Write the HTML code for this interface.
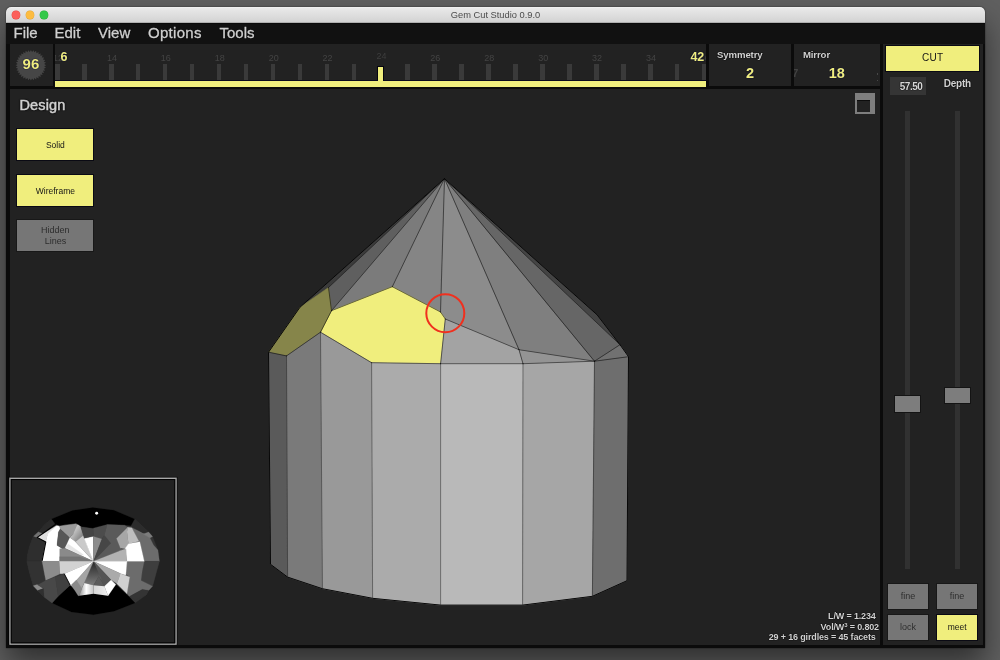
<!DOCTYPE html>
<html>
<head>
<meta charset="utf-8">
<title>Gem Cut Studio 0.9.0</title>
<style>
*{box-sizing:border-box;margin:0;padding:0}
html,body{width:1000px;height:660px;overflow:hidden}
body{background:#606060;font-family:"Liberation Sans",sans-serif;position:relative}
#win{position:absolute;left:6px;top:6.5px;width:979px;height:641px;background:#0b0b0b;border-radius:5px 5px 0 0;box-shadow:0 16px 30px rgba(0,0,0,.5),0 0 1.5px rgba(0,0,0,.8)}
#title{position:absolute;left:0;top:0;width:979px;height:16.5px;border-radius:5px 5px 0 0;background:linear-gradient(#f2f2f2 0,#e9e9e9 8%,#d3d3d3 100%);border-bottom:1px solid #b0b0b0}
#title .t{position:absolute;left:0;width:979px;top:3.5px;text-align:center;font-size:9.3px;color:#4c4c4c}
.tl{position:absolute;top:4.3px;width:7.8px;height:7.8px;border-radius:50%}
.menu{position:absolute;top:17px;font-size:15px;color:#cfcfcf;line-height:18px;text-shadow:0 0 1px #000;-webkit-text-stroke:.3px #cfcfcf}
.panel{position:absolute;background:#222}
.btn{position:absolute;font-size:8.5px;text-align:center;color:#151515;background:#f0ee7d;box-shadow:0 0 0 1px #0a0a14}
.gbtn{background:#767676;color:#2e2e2e;font-size:9px;box-shadow:0 0 0 1px #181818}
.lbl{position:absolute;color:#d2d2d2;font-weight:bold;text-shadow:0 0 1px #000,0 0 1px #000;white-space:nowrap}
.ynum{position:absolute;color:#f0ee7d;font-weight:bold;text-shadow:0 0 1px #00003c,0 0 1px #00003c;white-space:nowrap}
.tick{position:absolute;top:20.7px;width:4.5px;height:17px;background:#3a3a3a}
.tn{position:absolute;top:9px;width:20px;text-align:center;font-size:9px;color:#444;line-height:10px}
svg{position:absolute;left:0;top:0;overflow:visible}
</style>
</head>
<body>
<div id="layer" style="position:absolute;left:0;top:0;width:1000px;height:660px;will-change:transform">
<div id="win">
<div id="title">
<div class="tl" style="left:6px;background:#fc605b;box-shadow:0 0 0 .4px #e0443e"></div>
<div class="tl" style="left:20px;background:#fdbc40;box-shadow:0 0 0 .4px #dea032"></div>
<div class="tl" style="left:34px;background:#34c84a;box-shadow:0 0 0 .4px #27aa35"></div>
<div class="t">Gem Cut Studio 0.9.0</div>
</div>
<div style="position:absolute;left:0;top:17.5px;width:979px;height:19.5px;background:#111"></div>
<div class="menu" style="left:7.5px">File</div>
<div class="menu" style="left:48.5px">Edit</div>
<div class="menu" style="left:92px">View</div>
<div class="menu" style="left:142px;letter-spacing:.3px">Options</div>
<div class="menu" style="left:213.5px">Tools</div>
<div class="panel" id="p96" style="left:4px;top:37px;width:42.7px;height:42.7px">
<svg width="42.7" height="42.7"><polygon points="36.2,21.2 34.15,22.36 35.97,23.86 33.75,24.64 35.28,26.43 32.95,26.82 34.15,28.85 31.79,28.83 32.62,31.03 30.3,30.6 30.73,32.92 28.53,32.09 28.55,34.45 26.52,33.25 26.13,35.58 24.34,34.05 23.56,36.27 22.06,34.45 20.9,36.5 19.74,34.45 18.24,36.27 17.46,34.05 15.67,35.58 15.28,33.25 13.25,34.45 13.27,32.09 11.07,32.92 11.5,30.6 9.18,31.03 10.01,28.83 7.65,28.85 8.85,26.82 6.52,26.43 8.05,24.64 5.83,23.86 7.65,22.36 5.6,21.2 7.65,20.04 5.83,18.54 8.05,17.76 6.52,15.97 8.85,15.58 7.65,13.55 10.01,13.57 9.18,11.37 11.5,11.8 11.07,9.48 13.27,10.31 13.25,7.95 15.28,9.15 15.67,6.82 17.46,8.35 18.24,6.13 19.74,7.95 20.9,5.9 22.06,7.95 23.56,6.13 24.34,8.35 26.13,6.82 26.52,9.15 28.55,7.95 28.53,10.31 30.73,9.48 30.3,11.8 32.62,11.37 31.79,13.57 34.15,13.55 32.95,15.58 35.28,15.97 33.75,17.76 35.97,18.54 34.15,20.04" fill="#464646"/></svg>
<div class="ynum" style="left:0;width:41.8px;text-align:center;top:11.6px;font-size:15px;line-height:17px">96</div>
</div>
<div class="panel" id="ruler" style="left:49px;top:37px;width:650.5px;height:43.4px;overflow:hidden">
<div class="tick" style="left:0.1px"></div>
<div class="tn" style="left:-6.95px">12</div>
<div class="tick" style="left:27.05px"></div>
<div class="tick" style="left:54px"></div>
<div class="tn" style="left:46.95px">14</div>
<div class="tick" style="left:80.95px"></div>
<div class="tick" style="left:107.9px"></div>
<div class="tn" style="left:100.85px">16</div>
<div class="tick" style="left:134.85px"></div>
<div class="tick" style="left:161.8px"></div>
<div class="tn" style="left:154.75px">18</div>
<div class="tick" style="left:188.75px"></div>
<div class="tick" style="left:215.7px"></div>
<div class="tn" style="left:208.65px">20</div>
<div class="tick" style="left:242.65px"></div>
<div class="tick" style="left:269.6px"></div>
<div class="tn" style="left:262.55px">22</div>
<div class="tick" style="left:296.55px"></div>
<div class="tn" style="left:316.45px;top:7.5px;color:#3e3e3e">24</div>
<div class="tick" style="left:350.45px"></div>
<div class="tick" style="left:377.4px"></div>
<div class="tn" style="left:370.35px">26</div>
<div class="tick" style="left:404.35px"></div>
<div class="tick" style="left:431.3px"></div>
<div class="tn" style="left:424.25px">28</div>
<div class="tick" style="left:458.25px"></div>
<div class="tick" style="left:485.2px"></div>
<div class="tn" style="left:478.15px">30</div>
<div class="tick" style="left:512.15px"></div>
<div class="tick" style="left:539.1px"></div>
<div class="tn" style="left:532.05px">32</div>
<div class="tick" style="left:566.05px"></div>
<div class="tick" style="left:593px"></div>
<div class="tn" style="left:585.95px">34</div>
<div class="tick" style="left:619.95px"></div>
<div class="tick" style="left:646.9px"></div>
<div class="tn" style="left:639.85px">36</div>
<div style="position:absolute;left:323.4px;top:23.7px;width:4.7px;height:15px;background:#f0ee7d;box-shadow:0 0 0 1px #05050f"></div>
<div style="position:absolute;left:0;top:37.3px;width:650.5px;height:6px;background:#f0ee7d;box-shadow:0 0 0 1px #0a0a1e"></div>
<div style="position:absolute;left:323.4px;top:35.5px;width:4.7px;height:3px;background:#f0ee7d"></div>
<div class="ynum" style="left:5.5px;top:6px;font-size:12.5px;line-height:14px">6</div>
<div class="ynum" style="right:1.2px;top:6px;font-size:12.5px;line-height:14px;background:#222;padding-left:2px">42</div>
</div>
<div class="panel" id="psym" style="left:702.6px;top:37px;width:82.7px;height:42.7px;overflow:hidden">
<div class="lbl" style="left:8.4px;top:5.5px;font-size:9.6px;line-height:12px;letter-spacing:-.1px">Symmetry</div>
<div class="ynum" style="left:0;width:82.7px;text-align:center;top:21.5px;font-size:14.5px;line-height:17px">2</div>
</div>
<div class="panel" id="pmir" style="left:787.5px;top:37px;width:86.7px;height:42.7px;overflow:hidden">
<div class="lbl" style="left:9.4px;top:5.5px;font-size:9.6px;line-height:12px;letter-spacing:-.1px">Mirror</div>
<div class="ynum" style="left:0;width:86.7px;text-align:center;top:21.5px;font-size:14.5px;line-height:17px">18</div>
<div style="position:absolute;left:-1.2px;top:23.5px;font-size:11px;line-height:12px;color:#424242;font-weight:bold">7</div>
<div style="position:absolute;left:83px;top:29.5px;width:1.7px;height:1.7px;background:#484848"></div>
<div style="position:absolute;left:83px;top:36.3px;width:1.7px;height:1.7px;background:#484848"></div>
</div>
<div class="panel" id="view" style="left:3.7px;top:82.5px;width:870.6px;height:556px">
<div class="lbl" style="left:9.8px;top:8px;font-size:14.5px;line-height:17px;font-weight:normal;letter-spacing:.15px;color:#d0d0d0;-webkit-text-stroke:.5px #d0d0d0;text-shadow:0 0 1px #000,0 0 2px #000,0 0 2px #000">Design</div>
<div class="btn " style="left:7.8px;top:40.4px;width:75.8px;height:30.9px;line-height:32.3px">Solid</div>
<div class="btn " style="left:7.8px;top:85.5px;width:75.8px;height:31.3px;line-height:32.7px">Wireframe</div>
<div class="btn gbtn" style="left:7.8px;top:131px;width:75.8px;height:30.6px;line-height:10.5px;padding-top:5.2px">Hidden<br>Lines</div>
<div style="position:absolute;left:845.3px;top:4.4px;width:20px;height:20.6px;background:#7e7e7e"><div style="position:absolute;left:2.5px;top:6.5px;width:12.3px;height:12px;background:#222;border-top:1px solid #0c0c0c"></div></div>
<svg width="1000" height="660" viewBox="0 0 1000 660" style="left:-9.7px;top:-89px">
<g stroke-width="0.6" stroke-linejoin="round">
<polygon points="444.5,178.6 328.5,287.5 300,307.2" fill="#3b3b3b" stroke="#3b3b3b"/>
<polygon points="444.5,178.6 597,314.7 620,344.7" fill="#444444" stroke="#444444"/>
<polygon points="444.5,178.6 331.5,310.7 328.5,287.5" fill="#5f5f5f" stroke="#5f5f5f"/>
<polygon points="444.5,178.6 392.3,286.7 331.5,310.7" fill="#7b7b7b" stroke="#7b7b7b"/>
<polygon points="444.5,178.6 440.5,312 392.3,286.7" fill="#858585" stroke="#858585"/>
<polygon points="444.5,178.6 519,349.7 445.3,319 440.5,312" fill="#8c8c8c" stroke="#8c8c8c"/>
<polygon points="444.5,178.6 594.5,361.2 519,349.7" fill="#7f7f7f" stroke="#7f7f7f"/>
<polygon points="444.5,178.6 620,344.7 594.5,361.2" fill="#666666" stroke="#666666"/>
<polygon points="331.5,310.7 392.3,286.7 440.5,312 445.3,319 440.6,363.7 371.6,362.7 320.5,332.2" fill="#f0ee7d" stroke="#f0ee7d"/>
<polygon points="328.5,287.5 331.5,310.7 320.5,332.2 286.5,355.9 268.5,352.2 300,307.2" fill="#86854a" stroke="#86854a"/>
<polygon points="445.3,319 519,349.7 523,363.7 440.6,363.7" fill="#a3a3a3" stroke="#a3a3a3"/>
<polygon points="519,349.7 594.5,361.2 523,363.7" fill="#949494" stroke="#949494"/>
<polygon points="594.5,361.2 620,344.7 628.5,356.7" fill="#717171" stroke="#717171"/>
<polygon points="268.5,352.2 286.5,355.9 287.6,577.1 270.5,564.3" fill="#5a5a5a" stroke="#5a5a5a"/>
<polygon points="286.5,355.9 320.5,332.2 322.4,588.7 287.6,577.1" fill="#7a7a7a" stroke="#7a7a7a"/>
<polygon points="320.5,332.2 371.6,362.7 372.6,598.3 322.4,588.7" fill="#999999" stroke="#999999"/>
<polygon points="371.6,362.7 440.6,363.7 440.6,605.1 372.6,598.3" fill="#ababab" stroke="#ababab"/>
<polygon points="440.6,363.7 523,363.7 522.6,605.1 440.6,605.1" fill="#b9b9b9" stroke="#b9b9b9"/>
<polygon points="523,363.7 594.5,361.2 592.4,596.3 522.6,605.1" fill="#a6a6a6" stroke="#a6a6a6"/>
<polygon points="594.5,361.2 628.5,356.7 627,580.7 592.4,596.3" fill="#6e6e6e" stroke="#6e6e6e"/>
</g>
<g stroke="#000" stroke-opacity="0.6" stroke-width="0.85" stroke-linecap="round" fill="none">
<path d="M444.5 178.6L328.5 287.5"/>
<path d="M444.5 178.6L331.5 310.7"/>
<path d="M444.5 178.6L392.3 286.7"/>
<path d="M444.5 178.6L440.5 312"/>
<path d="M444.5 178.6L519 349.7"/>
<path d="M444.5 178.6L594.5 361.2"/>
<path d="M444.5 178.6L620 344.7"/>
<path d="M328.5 287.5L331.5 310.7"/>
<path d="M331.5 310.7L392.3 286.7"/>
<path d="M392.3 286.7L440.5 312"/>
<path d="M440.5 312L445.3 319"/>
<path d="M445.3 319L519 349.7"/>
<path d="M519 349.7L594.5 361.2"/>
<path d="M519 349.7L523 363.7"/>
<path d="M594.5 361.2L620 344.7"/>
<path d="M331.5 310.7L320.5 332.2"/>
<path d="M445.3 319L440.6 363.7"/>
<path d="M320.5 332.2L286.5 355.9"/>
<path d="M286.5 355.9L268.5 352.2"/>
</g>
<g stroke="#000" stroke-opacity="0.6" stroke-width="0.85" stroke-linecap="round" fill="none">
<path d="M320.5 332.2L371.6 362.7"/>
<path d="M371.6 362.7L440.6 363.7"/>
<path d="M440.6 363.7L523 363.7"/>
<path d="M523 363.7L594.5 361.2"/>
<path d="M594.5 361.2L628.5 356.7"/>
</g>
<g stroke="#000" stroke-opacity="0.38" stroke-width="1" stroke-linecap="round" fill="none">
<path d="M286.5 355.9L287.6 577.1"/>
<path d="M320.5 332.2L322.4 588.7"/>
<path d="M371.6 362.7L372.6 598.3"/>
<path d="M440.6 363.7L440.6 605.1"/>
<path d="M523 363.7L522.6 605.1"/>
<path d="M594.5 361.2L592.4 596.3"/>
</g>
<polygon points="444.5,178.6 300,307.2 268.5,352.2 270.5,564.3 287.6,577.1 322.4,588.7 372.6,598.3 440.6,605.1 522.6,605.1 592.4,596.3 627,580.7 628.5,356.7 620,344.7 597,314.7" fill="none" stroke="#080808" stroke-width="1" stroke-linejoin="round"/>
<circle cx="445.3" cy="313.2" r="19" fill="none" stroke="#f0301e" stroke-width="2"/>
</svg>
<svg width="1000" height="660" viewBox="0 0 1000 660" style="left:-9.7px;top:-89px">
<defs>
<linearGradient id="gradA" x1="0" y1="0" x2="1" y2="1"><stop offset="0" stop-color="#f4f4f4"/><stop offset="1" stop-color="#6a6a6a"/></linearGradient>
<linearGradient id="gradB" x1="0" y1="0" x2="0" y2="1"><stop offset="0" stop-color="#262626"/><stop offset="1" stop-color="#7c7c7c"/></linearGradient>
<linearGradient id="gradC" x1="0" y1="0" x2="1" y2="0"><stop offset="0" stop-color="#909090"/><stop offset=".5" stop-color="#ffffff"/><stop offset="1" stop-color="#c4c4c4"/></linearGradient>
<linearGradient id="gradD" x1="0" y1="0" x2="1" y2="0"><stop offset="0" stop-color="#d6d6d6"/><stop offset="1" stop-color="#f0f0f0"/></linearGradient>
</defs>
<rect x="8.4" y="476.9" width="169" height="168.1" fill="#000"/>
<rect x="10" y="478.3" width="166" height="165.8" fill="#222" stroke="#a8a8a8" stroke-width="1.5"/>
<rect x="11.25" y="479.55" width="163.5" height="163.3" fill="none" stroke="#000" stroke-width="1"/>
<g stroke-width="0.25">
<polygon points="26.82,561.36 27.58,554.55 29.39,546.97 33.33,536.06 38.48,531.67 45.00,524.24 51.67,518.94 72.27,510.61 92.73,507.58 113.94,510.30 134.55,518.94 141.21,525.00 148.64,532.12 152.58,536.52 157.88,550.00 159.39,561.36 155.91,574.09 152.58,586.06 148.64,590.45 146.21,595.00 135.00,603.03 113.94,611.21 93.48,614.70 71.52,611.97 52.12,603.03 44.09,596.97 37.73,590.91 33.18,585.76 29.09,571.21" fill="#343434" stroke="#343434"/>
<polygon points="131.82,527.73 143.03,532.88 149.85,537.73 153.48,545.00 157.88,550.00 159.39,561.36 144.24,561.36 139.79,541.76 138.94,541.36" fill="#6c6c6c" stroke="#6c6c6c"/>
<polygon points="134.55,518.94 141.21,525.00 148.64,532.12 143.03,532.88 130.91,525.76" fill="#2c2c2c" stroke="#2c2c2c"/>
<polygon points="143.33,534.09 148.64,532.12 152.58,536.52 149.85,537.88" fill="#7c7c7c" stroke="#7c7c7c"/>
<polygon points="144.24,561.36 159.39,561.36 155.83,574.09 152.58,586.14 140.98,580.45 142.20,570.91" fill="#3e3e3e" stroke="#3e3e3e"/>
<polygon points="126.82,561.36 144.24,561.36 142.20,570.91 140.98,580.45 152.58,586.14 148.64,590.45 142.20,589.39 129.39,596.52 126.97,593.79 129.70,576.89 125.76,574.09" fill="#6c6c6c" stroke="#6c6c6c"/>
<polygon points="142.20,589.39 148.64,590.45 146.21,595.00 135.00,600.30 129.39,596.52" fill="#343434" stroke="#343434"/>
<polygon points="26.82,561.36 41.97,561.36 45.76,541.82 37.27,537.73 33.33,536.06 29.39,546.97 27.58,554.55" fill="#2e2e2e" stroke="#2e2e2e"/>
<polygon points="33.64,536.14 38.48,531.67 42.42,532.88 37.27,537.73" fill="#727272" stroke="#727272"/>
<polygon points="26.82,561.36 42.12,561.36 45.76,580.45 38.48,584.55 33.18,585.76 29.09,571.21" fill="#323232" stroke="#323232"/>
<polygon points="33.18,585.76 37.27,584.55 43.33,588.48 37.73,590.61" fill="#8a8a8a" stroke="#8a8a8a"/>
<polygon points="45.00,524.24 51.67,518.94 55.30,523.94 42.42,532.88 38.48,531.67" fill="#2a2a2a" stroke="#2a2a2a"/>
<polygon points="51.67,518.94 72.27,510.61 92.73,507.58 113.94,510.30 134.55,518.94 130.91,525.76 124.55,525.00 107.27,524.55 102.58,527.58 93.03,528.64 81.06,526.67 78.64,524.85 76.21,523.48 65.00,524.55 59.70,526.06 55.30,523.94" fill="#000000" stroke="#000000"/>
<polygon points="52.12,603.03 71.52,611.97 93.48,614.70 113.94,611.21 135.00,603.03 129.39,596.97 116.06,584.55 108.03,595.76 93.48,593.79 79.09,595.76 70.15,585.15 58.18,596.36" fill="#000000" stroke="#000000"/>
<polygon points="37.27,537.42 56.14,525.76 59.70,526.06 47.73,534.55 45.76,541.52" fill="#dedede" stroke="#dedede"/>
<polygon points="45.76,541.82 47.73,534.09 56.97,525.76 59.70,526.67 60.15,529.24 58.48,532.12 56.97,545.30 61.82,548.18 59.70,561.36 41.97,561.36" fill="#ffffff" stroke="#ffffff"/>
<polygon points="59.85,526.06 76.21,523.64 79.09,527.27 73.03,534.55 69.39,537.58 60.15,529.09" fill="#9a9a9a" stroke="#9a9a9a"/>
<polygon points="60.15,529.09 69.39,537.58 65.00,548.18 61.82,548.18 56.97,545.30 58.48,532.12" fill="#575757" stroke="#575757"/>
<polygon points="77.58,524.24 81.06,526.67 83.48,535.30 75.45,541.82 69.85,537.27 73.03,534.55" fill="url(#gradA)"/>
<polygon points="65.00,548.18 69.85,537.58 75.45,541.82 93.48,561.36" fill="#ffffff" stroke="#ffffff"/>
<polygon points="65.45,547.27 68.18,543.94 83.64,554.85 80.61,555.45" fill="#e6e6e6" stroke="#e6e6e6"/>
<polygon points="75.45,541.82 83.48,535.30 84.85,538.79 93.48,561.36" fill="#cacaca" stroke="#cacaca"/>
<polygon points="84.24,538.18 93.18,536.21 93.33,561.36" fill="#ffffff" stroke="#ffffff"/>
<polygon points="59.70,548.79 65.00,548.18 93.48,561.36 59.70,561.36" fill="#8a8a8a" stroke="#8a8a8a"/>
<polygon points="59.70,556.67 79.85,556.67 93.48,561.36 59.70,561.36" fill="#747474" stroke="#747474"/>
<polygon points="80.61,526.67 93.03,528.48 93.18,536.36 84.24,538.33" fill="#444444" stroke="#444444"/>
<polygon points="93.18,528.18 107.27,524.55 104.39,535.30 102.05,538.79 93.64,536.52" fill="#4c4c4c" stroke="#4c4c4c"/>
<polygon points="93.48,536.52 102.05,539.09 93.48,561.36" fill="#8c8c8c" stroke="#8c8c8c"/>
<polygon points="102.05,538.79 104.39,535.30 110.91,543.33 93.48,561.36" fill="#464646" stroke="#464646"/>
<polygon points="107.27,524.55 124.55,525.15 127.73,527.27 116.52,538.48 120.45,548.18 125.30,548.48 93.48,561.36 110.91,543.33 104.39,535.30" fill="#5a5a5a" stroke="#5a5a5a"/>
<polygon points="116.52,538.48 127.73,527.27 126.97,532.12 128.48,543.94 125.45,548.64 121.36,548.03 120.45,548.18" fill="#a6a6a6" stroke="#a6a6a6"/>
<polygon points="127.73,527.27 131.82,527.73 138.94,541.36 128.48,543.79 126.97,532.12" fill="#bebebe" stroke="#bebebe"/>
<polygon points="125.30,548.33 128.48,543.79 139.79,541.76 144.24,561.36 126.82,561.36" fill="#ffffff" stroke="#ffffff"/>
<polygon points="93.48,561.36 121.36,550.15 126.06,548.79 126.82,561.36" fill="#b2b2b2" stroke="#b2b2b2"/>
<polygon points="93.48,561.36 126.97,561.36 125.76,575.30 120.45,573.48" fill="#ffffff" stroke="#ffffff"/>
<polygon points="93.48,561.36 120.45,573.48 116.89,583.48 110.91,579.85" fill="#aaaaaa" stroke="#aaaaaa"/>
<polygon points="120.45,573.48 129.70,576.89 126.97,593.79 116.89,583.71" fill="#d0d0d0" stroke="#d0d0d0"/>
<polygon points="93.48,561.36 111.06,580.00 104.39,586.21 98.79,576.52" fill="#555555" stroke="#555555"/>
<polygon points="93.48,561.36 101.82,580.00 98.79,576.52 93.48,585.30 84.24,582.88" fill="url(#gradB)"/>
<polygon points="98.79,576.52 104.39,586.21 93.48,585.30" fill="#5c5c5c" stroke="#5c5c5c"/>
<polygon points="111.06,580.00 115.76,584.55 108.03,595.76 104.39,586.36" fill="#ffffff" stroke="#ffffff"/>
<polygon points="79.09,595.76 80.61,590.91 84.24,582.88 93.48,585.30 93.48,593.79" fill="url(#gradC)"/>
<polygon points="93.48,585.30 104.39,586.21 108.03,595.76 93.48,593.79" fill="url(#gradD)"/>
<polygon points="93.48,561.36 59.09,561.36 59.70,573.79 64.24,573.64" fill="#d2d2d2" stroke="#d2d2d2"/>
<polygon points="93.48,561.36 64.39,573.64 70.15,585.00 71.82,585.76" fill="#ffffff" stroke="#ffffff"/>
<polygon points="93.48,561.36 71.52,585.76 78.94,594.09 84.24,582.88" fill="#a4a4a4" stroke="#a4a4a4"/>
<polygon points="71.36,584.85 76.36,580.00 82.12,588.64 79.09,595.76 78.18,595.76" fill="#8a8a8a" stroke="#8a8a8a"/>
<polygon points="42.12,561.36 59.09,561.36 59.70,574.09 45.76,580.45" fill="#8c8c8c" stroke="#8c8c8c"/>
<polygon points="38.48,584.55 45.76,580.45 55.30,576.97 58.18,596.36 52.12,603.03 44.09,596.97 43.33,588.48 37.27,584.55" fill="#484848" stroke="#484848"/>
<polygon points="55.30,576.97 64.17,573.64 70.15,585.15 58.18,596.36" fill="#404040" stroke="#404040"/>
<polygon points="37.73,590.61 43.33,588.48 44.09,596.97" fill="#303030" stroke="#303030"/>
</g>
<path d="M55.76 524.24 L37.27 537.42 L45.76 541.97 L42.12 560.91" fill="none" stroke="#000" stroke-width="1.1" stroke-linejoin="miter"/>
<path d="M64.17 573.64 L70.15 585.15" fill="none" stroke="#000" stroke-width="0.8"/>
<circle cx="96.67" cy="513.18" r="1.45" fill="#fff"/>
</svg>
<div class="lbl" style="right:4.6px;top:522.1px;font-size:9px;line-height:10px;letter-spacing:-.15px">L/W = 1.234</div>
<div class="lbl" style="right:1.3px;top:532.6px;font-size:9px;line-height:10px;letter-spacing:-.15px">Vol/W<span style="font-size:6px;position:relative;top:-3px;line-height:1px">3</span> = 0.802</div>
<div class="lbl" style="right:4.6px;top:543.4px;font-size:9px;line-height:10px;letter-spacing:-.15px">29 + 16 girdles = 45 facets</div>
</div>
<div class="panel" id="side" style="left:877px;top:37px;width:100px;height:601.5px">
<div class="btn " style="left:3.3px;top:2.6px;width:92.8px;height:24.9px;line-height:24.9px;font-size:10px;letter-spacing:.2px">CUT</div>
<div style="position:absolute;left:7.2px;top:33.6px;width:35.8px;height:17.9px;background:#353535"></div>
<div class="lbl" style="left:16.7px;top:37.8px;font-size:10px;line-height:12px;letter-spacing:-.45px;color:#d8d8d8">57.50</div>
<div class="lbl" style="left:60.8px;top:34.2px;font-size:10px;line-height:12px;letter-spacing:-.25px">Depth</div>
<div style="position:absolute;left:22.3px;top:67.5px;width:5.2px;height:458.4px;background:#313131"></div>
<div style="position:absolute;left:71.8px;top:67.5px;width:5.2px;height:458.4px;background:#313131"></div>
<div style="position:absolute;left:12.4px;top:352.7px;width:25px;height:15.6px;background:#7d7d7d;box-shadow:0 0 0 1px #141414"></div>
<div style="position:absolute;left:61.9px;top:344.5px;width:25px;height:14.7px;background:#7d7d7d;box-shadow:0 0 0 1px #141414"></div>
<div class="btn gbtn" style="left:5px;top:540.3px;width:39.9px;height:25px;line-height:25px;">fine</div>
<div class="btn gbtn" style="left:54px;top:540.3px;width:40.2px;height:25px;line-height:25px;">fine</div>
<div class="btn gbtn" style="left:5px;top:571.5px;width:39.9px;height:24.7px;line-height:24.7px;">lock</div>
<div class="btn " style="left:54px;top:571.5px;width:40.2px;height:24.7px;line-height:24.7px;">meet</div>
</div>
</div>
</div>
</body>
</html>
